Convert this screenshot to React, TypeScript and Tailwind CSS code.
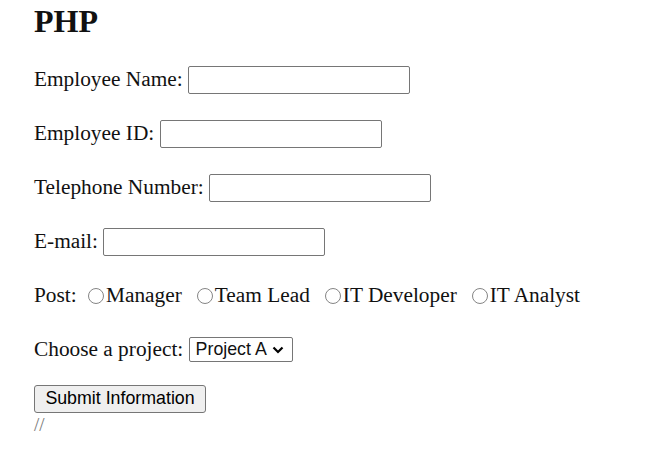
import React from "react";

function Radio({ label }: { label: string }) {
  return (
    <span className="inline-flex items-center">
      <span className="inline-block w-[16px] h-[16px] rounded-full border border-[#858585] bg-white ml-[6px] mr-[2px] translate-y-[1px]" />
      <span>{label}</span>
    </span>
  );
}

function TextField({ label }: { label: string }) {
  return (
    <div className="flex items-center h-[33px]">
      <span className="whitespace-pre">{label} </span>
      <input
        type="text"
        className="w-[222px] h-[28px] border border-[#767676] rounded-[2px] bg-white outline-none"
      />
    </div>
  );
}

export default function App() {
  return (
    <div
      className="bg-white text-[#111] min-h-[458px] pl-[34px] text-[21.33px]"
      style={{ fontFamily: '"Liberation Serif", "Times New Roman", serif' }}
    >
      <div className="pt-[3px] text-[32px] font-bold leading-[36px]">PHP</div>
      <div className="flex flex-col gap-[21px] mt-[24px]">
        <TextField label="Employee Name:" />
        <TextField label="Employee ID:" />
        <TextField label="Telephone Number:" />
        <TextField label="E-mail:" />
        <div className="flex items-center h-[33px] whitespace-pre">
          <span>Post: </span>
          <Radio label="Manager" />
          <span className="inline-block w-[9px]" />
          <Radio label="Team Lead" />
          <span className="inline-block w-[9px]" />
          <Radio label="IT Developer" />
          <span className="inline-block w-[9px]" />
          <Radio label="IT Analyst" />
        </div>
        <div className="flex items-center h-[33px] whitespace-pre">
          <span>Choose a project: </span>
          <div
            className="flex items-center w-[104px] h-[25px] border border-[#767676] rounded-[2px] bg-white pl-[6px] text-[17.8px]"
            style={{ fontFamily: '"Liberation Sans", Arial, sans-serif' }}
          >
            <span className="leading-none">Project A</span>
            <svg width="12" height="8" viewBox="0 0 12 8" className="ml-[5px] mt-[1px]">
              <path d="M1.5 1.5 L6 6 L10.5 1.5" fill="none" stroke="#000" strokeWidth="2.2" />
            </svg>
          </div>
        </div>
      </div>
      <div className="mt-[16px]">
        <button
          className="w-[172px] h-[28px] border border-[#767676] rounded-[3px] bg-[#efefef] text-[17.8px] leading-none text-black"
          style={{ fontFamily: '"Liberation Sans", Arial, sans-serif' }}
        >
          Submit Information
        </button>
      </div>
      <div className="text-[#777] text-[19px] leading-[20px] mt-[1px]">//</div>
    </div>
  );
}
